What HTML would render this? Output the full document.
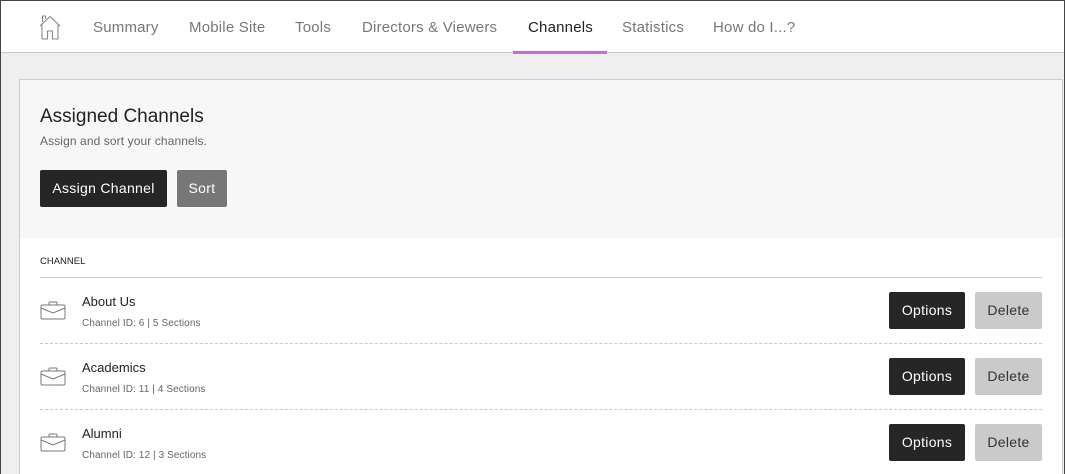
<!DOCTYPE html>
<html><head><style>
*{box-sizing:border-box;margin:0;padding:0}
html,body{width:1065px;height:474px;overflow:hidden}
body{font-family:"Liberation Sans",sans-serif;background:#efefef;position:relative}
.frame{position:absolute;left:0;top:0;width:1065px;height:474px;border:1px solid #444;border-bottom:none;pointer-events:none;z-index:5}
.nav{position:absolute;left:0;top:0;width:1065px;height:53px;background:#fff;border-bottom:1px solid #c8c8c8}
.nav span{position:absolute;top:19px;font-size:15px;color:#777;letter-spacing:0.2px}
.nav .act{color:#222}
.ul{position:absolute;left:513px;top:51px;width:94px;height:3px;background:#c76dd9}
.panel{position:absolute;left:19px;top:79px;width:1044px;height:400px;border:1px solid #ccc;background:#fff}
.hd{height:158px;background:#f7f7f7}
h1{position:absolute;left:20px;top:26px;font-size:19px;font-weight:normal;color:#222}
.sub{position:absolute;left:20px;top:54px;font-size:12px;color:#666;letter-spacing:0.1px}
.btn{position:absolute;height:37px;line-height:37px;text-align:center;font-size:14px;border-radius:2px;letter-spacing:0.3px}
.dk{background:#262626;color:#fff}
.gr{background:#777;color:#fff}
.lt{background:#cacaca;color:#333}
.th{position:absolute;left:20px;top:176px;font-size:9.5px;color:#222}
.line{position:absolute;left:20px;width:1002px;border-top:1px solid #c8c8c8}
.dash{position:absolute;left:20px;width:1002px;border-top:1px dashed #c8c8c8}
.nm{position:absolute;left:62px;font-size:13px;color:#222}
.id{position:absolute;left:62px;font-size:10px;color:#666;letter-spacing:0.1px}
.ic{position:absolute;left:20px}
</style></head><body>
<div class="nav">
<svg style="position:absolute;left:38px;top:14px" width="24" height="26" viewBox="0 0 24 26" fill="none" stroke="#888" stroke-width="1.1"><path d="M2 12 L12 2.5 L22 12 M4 10 V25 H9.5 V17 H14.5 V25 H20 V10 M4.5 8 V2 H7.5 V5"/></svg>
<span style="left:93px">Summary</span>
<span style="left:189px">Mobile Site</span>
<span style="left:295px">Tools</span>
<span style="left:362px">Directors &amp; Viewers</span>
<span class="act" style="left:528px">Channels</span>
<span style="left:622px">Statistics</span>
<span style="left:713px">How do I...?</span>
<div class="ul"></div>
</div>
<div class="panel">
<div class="hd"></div>
<h1>Assigned Channels</h1>
<div class="sub">Assign and sort your channels.</div>
<div class="btn dk" style="left:20px;top:90px;width:127px">Assign Channel</div>
<div class="btn gr" style="left:157px;top:90px;width:50px">Sort</div>
<div class="th">CHANNEL</div>
<div class="line" style="top:197px"></div>

<svg class="ic" style="top:220px" width="26" height="20" viewBox="0 0 26 20" fill="none" stroke="#777"><rect x="1" y="5" width="24" height="14" rx="1.5"/><path d="M9 5 V3 Q9 2 10 2 H16 Q17 2 17 3 V5 M1 8 L13 13 L25 8"/></svg>
<div class="nm" style="top:214px">About Us</div>
<div class="id" style="top:238px">Channel ID: 6 | 5 Sections</div>
<div class="btn dk" style="left:869px;top:212px;width:76px">Options</div>
<div class="btn lt" style="left:955px;top:212px;width:67px">Delete</div>
<div class="dash" style="top:263px"></div>

<svg class="ic" style="top:286px" width="26" height="20" viewBox="0 0 26 20" fill="none" stroke="#777"><rect x="1" y="5" width="24" height="14" rx="1.5"/><path d="M9 5 V3 Q9 2 10 2 H16 Q17 2 17 3 V5 M1 8 L13 13 L25 8"/></svg>
<div class="nm" style="top:280px">Academics</div>
<div class="id" style="top:304px">Channel ID: 11 | 4 Sections</div>
<div class="btn dk" style="left:869px;top:278px;width:76px">Options</div>
<div class="btn lt" style="left:955px;top:278px;width:67px">Delete</div>
<div class="dash" style="top:329px"></div>

<svg class="ic" style="top:352px" width="26" height="20" viewBox="0 0 26 20" fill="none" stroke="#777"><rect x="1" y="5" width="24" height="14" rx="1.5"/><path d="M9 5 V3 Q9 2 10 2 H16 Q17 2 17 3 V5 M1 8 L13 13 L25 8"/></svg>
<div class="nm" style="top:346px">Alumni</div>
<div class="id" style="top:370px">Channel ID: 12 | 3 Sections</div>
<div class="btn dk" style="left:869px;top:344px;width:76px">Options</div>
<div class="btn lt" style="left:955px;top:344px;width:67px">Delete</div>
</div>
<div class="frame"></div>
</body></html>
